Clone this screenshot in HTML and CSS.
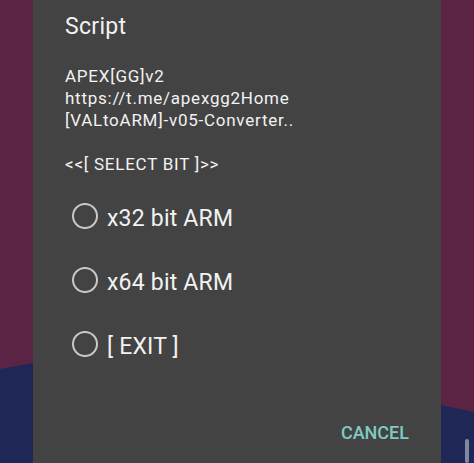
FILE: index.html
```html
<!DOCTYPE html>
<html lang="en">
<head>
<meta charset="UTF-8" />
<meta name="viewport" content="width=device-width, initial-scale=1" />
<title>Script</title>
<link rel="stylesheet" href="styles.css">
</head>
<body>

<!-- wallpaper behind the dialog -->
<svg class="backdrop" viewBox="0 0 474 463" preserveAspectRatio="none">
  <rect width="474" height="463" fill="#5b2344" />
  <polygon points="0,369 145,343 474,412 474,463 0,463" fill="#1f2757" />
</svg>

<div class="dialog">
  <div class="title">Script</div>

  <div class="message">
    APEX[GG]v2<br>
    https://t.me/apexgg2Home<br>
    [VALtoARM]-v05-Converter..<br>
    <br>
    &lt;&lt;[ SELECT BIT ]&gt;&gt;
  </div>

  <div class="choices">
    <div class="choice">
      <svg class="radio" viewBox="0 0 28 28"><circle cx="14" cy="14" r="12" /></svg>
      <span class="label">x32 bit ARM</span>
    </div>
    <div class="choice">
      <svg class="radio" viewBox="0 0 28 28"><circle cx="14" cy="14" r="12" /></svg>
      <span class="label">x64 bit ARM</span>
    </div>
    <div class="choice">
      <svg class="radio" viewBox="0 0 28 28"><circle cx="14" cy="14" r="12" /></svg>
      <span class="label">[ EXIT ]</span>
    </div>
  </div>

  <div class="actions">
    <button class="btn">CANCEL</button>
  </div>
</div>

<div class="scrollbar"></div>

</body>
</html>
```

FILE: styles.css
```css
html, body {
  margin: 0;
  height: 463px;
  overflow: hidden;
}
body {
  position: relative;
  background: #5b2344;
  font-family: Roboto, 'Noto Sans', sans-serif;
  color: #f2f2f2;
}
.backdrop {
  position: absolute;
  left: 0;
  top: 0;
  width: 100%;
  height: 100%;
}
.dialog {
  position: relative;
  margin-left: 33px;
  width: 408px;
  height: 463px;
  box-sizing: border-box;
  background: #434343;
  padding: 14px 24px 0 32px;
}
.title {
  font-size: 23px;
  line-height: 26px;
  letter-spacing: 0.3px;
}
.message {
  margin-top: 25px;
  font-size: 17px;
  line-height: 22px;
  letter-spacing: 0.75px;
}
.choices {
  margin-top: 9px;
}
.choice {
  display: flex;
  align-items: center;
  height: 64px;
}
.radio {
  width: 28px;
  height: 28px;
  margin-left: 6px;
  flex: none;
}
.radio circle {
  fill: none;
  stroke: #c8c8c8;
  stroke-width: 2;
}
.label {
  margin-left: 8px;
  margin-top: 4px;
  font-size: 23px;
  letter-spacing: 0.2px;
}
.actions {
  display: flex;
  justify-content: flex-end;
  margin-top: 38px;
}
.btn {
  background: none;
  border: none;
  height: 36px;
  padding: 0 8px;
  font-family: Roboto, sans-serif;
  font-weight: 500;
  font-size: 18px;
  color: #7fcbc2;
}
.scrollbar {
  position: absolute;
  right: 5px;
  bottom: 0;
  width: 4px;
  height: 24px;
  border-radius: 2px;
  background: #9aa0b8;
  opacity: 0.8;
}
```
